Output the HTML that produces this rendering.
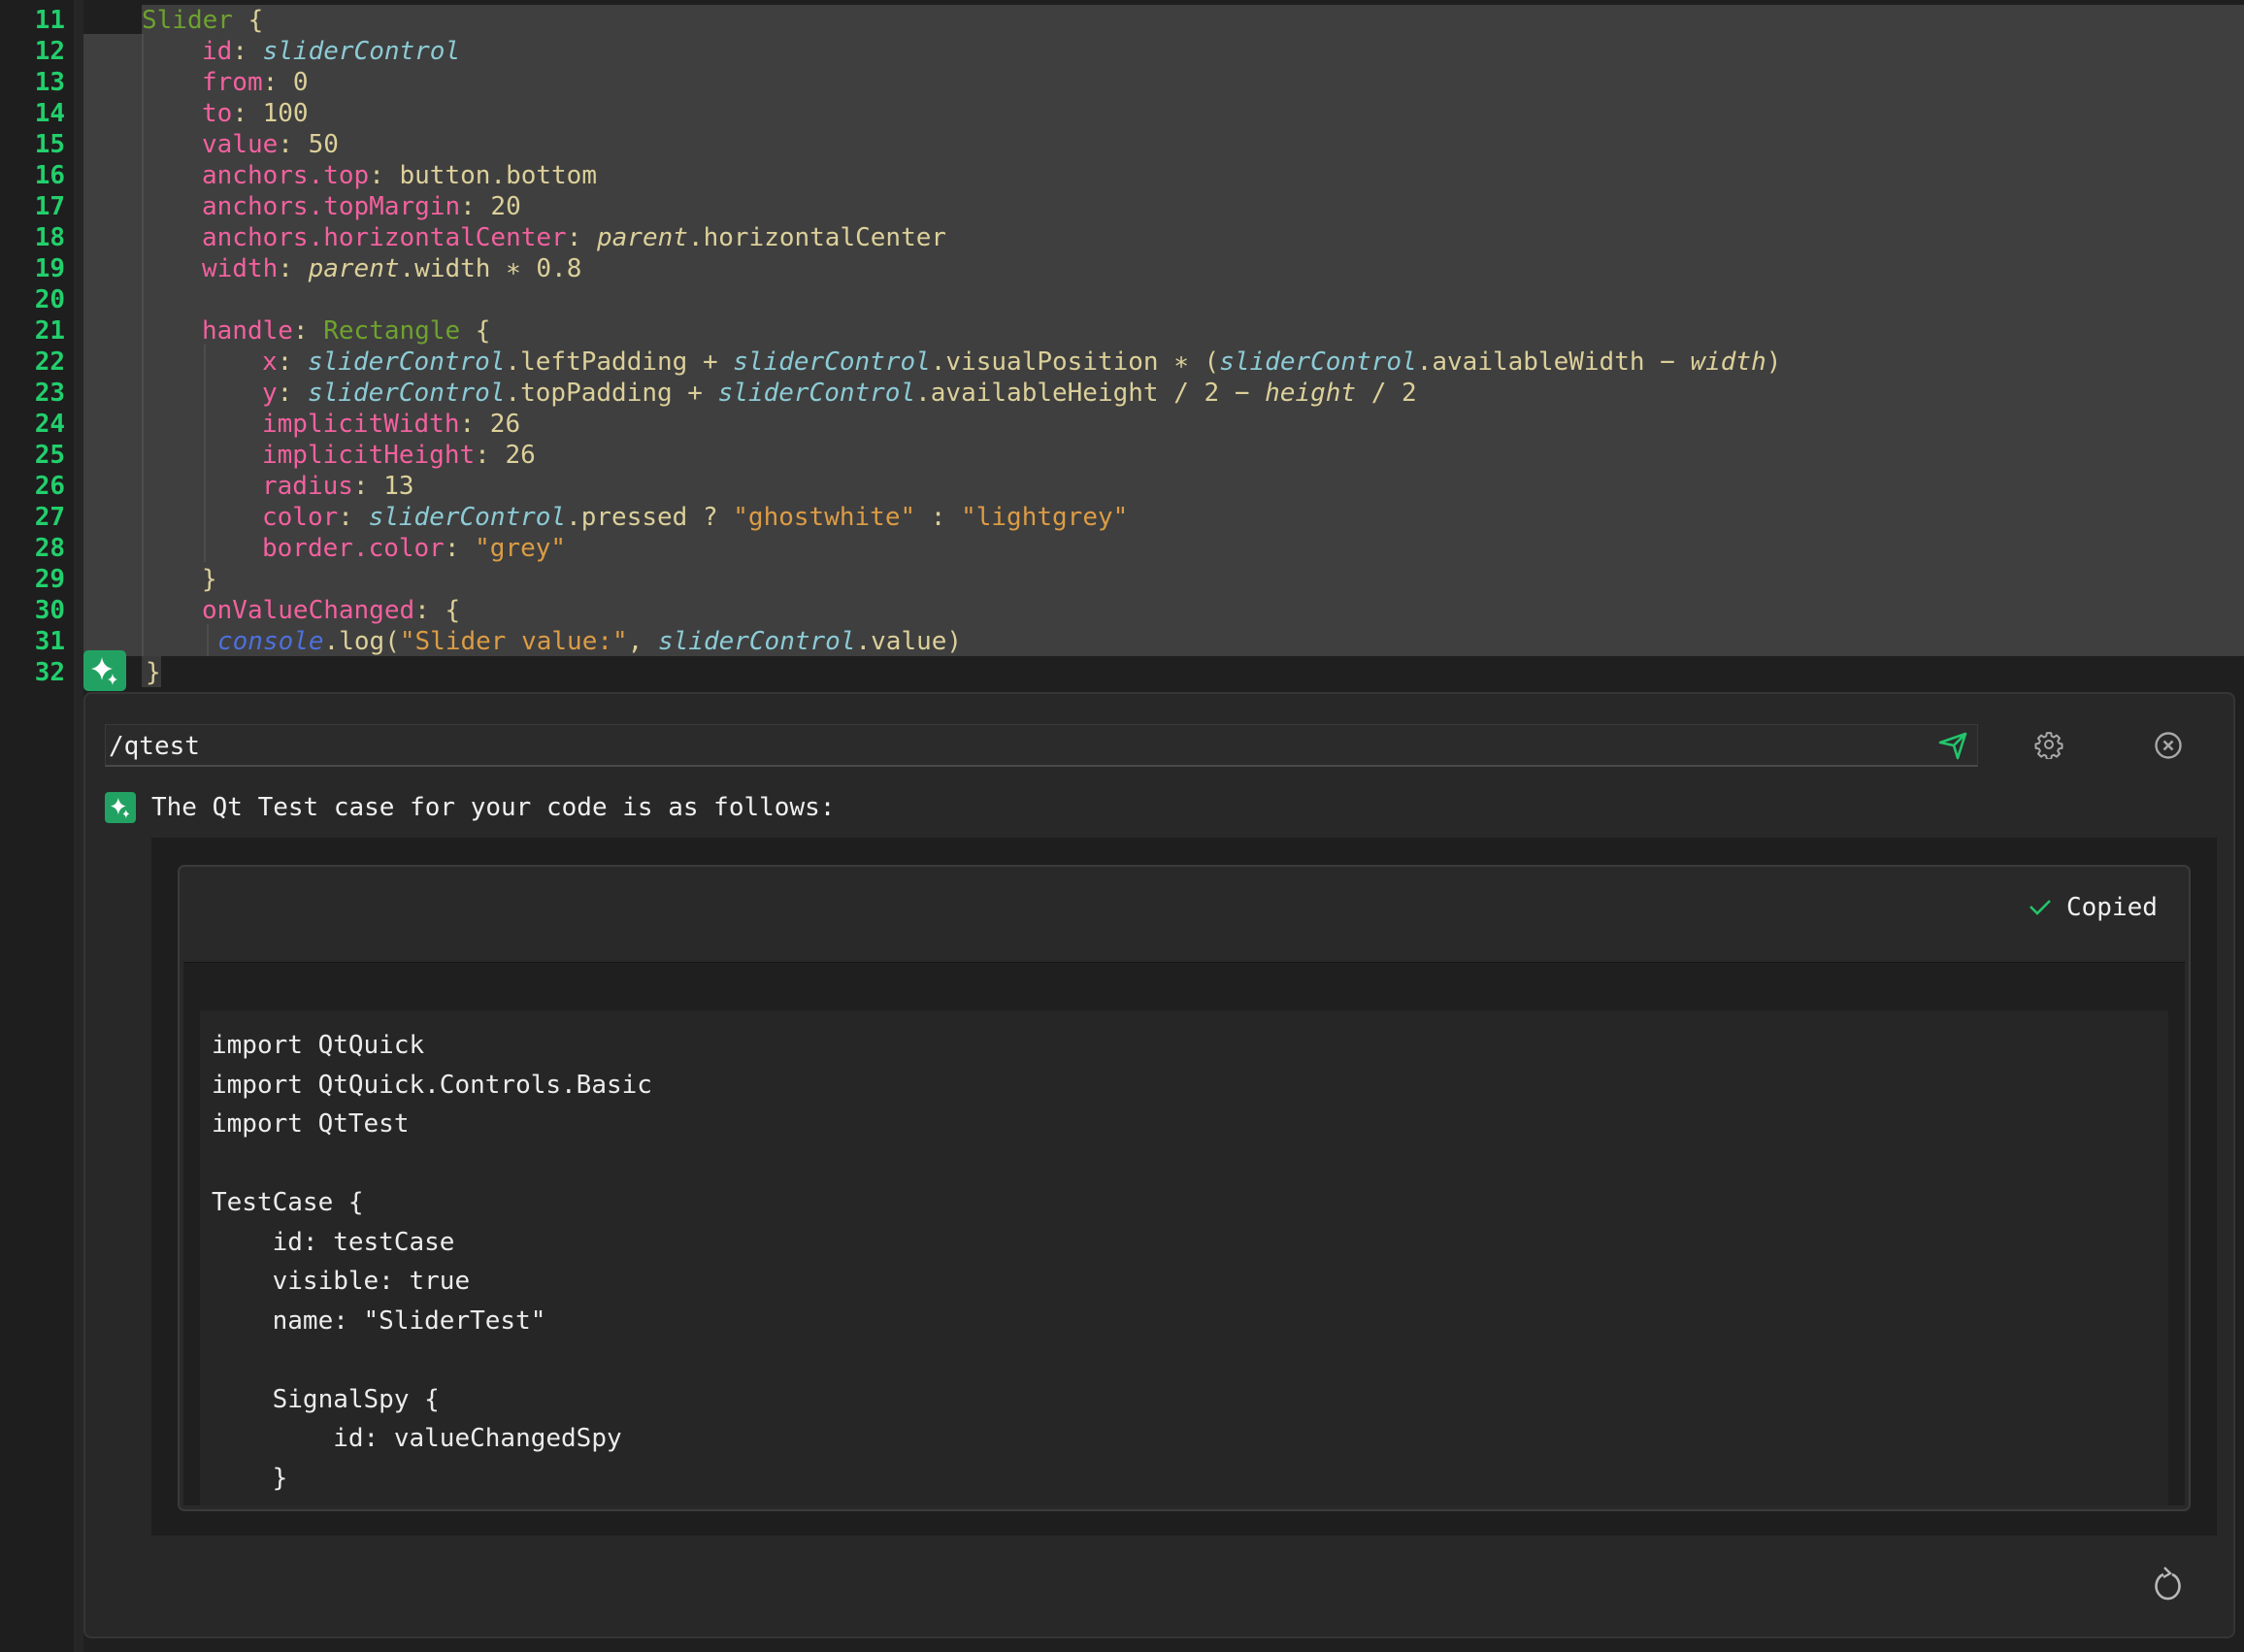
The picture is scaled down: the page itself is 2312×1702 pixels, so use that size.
<!DOCTYPE html>
<html><head><meta charset="utf-8">
<style>
*{margin:0;padding:0;box-sizing:border-box}
body{width:2312px;height:1702px;background:#1f1f1f;position:relative;overflow:hidden;font-family:"DejaVu Sans Mono","Liberation Mono",monospace;font-size:26px}
.a{position:absolute}
.ln{position:absolute;left:0;width:67px;text-align:right;color:#22cf6c;font-weight:bold;height:32px;line-height:32px;margin-top:3px}
.cl{position:absolute;white-space:pre;height:32px;line-height:32px;color:#dcd09a;margin-top:3px}
.k{color:#f2619f}.i{color:#8ccbd6;font-style:italic}.g{color:#6ea22f}.s{color:#dc9c45}.p{font-style:italic;color:#dcd09a}.b{color:#4d70dc;font-style:italic}
.cc{position:absolute;left:218px;white-space:pre;color:#ececec;line-height:40px;height:40px;margin-top:3px}
</style></head><body>
<div class="a" style="left:0;top:0;width:76px;height:1702px;background:#1e1e1e"></div>
<div class="a" style="left:76px;top:0;width:10px;height:1702px;background:#262626"></div>
<div class="a" style="left:86px;top:5px;width:2226px;height:671px;background:#3f3f3f"></div>
<div class="a" style="left:86px;top:0;width:2226px;height:5px;background:#1f1f1f"></div>
<div class="a" style="left:86px;top:5px;width:60px;height:30px;background:#1f1f1f"></div>
<div class="a" style="left:86px;top:676px;width:2226px;height:37px;background:#1f1f1f"></div>
<div class="a" style="left:146px;top:676px;width:20px;height:32px;background:#3a3a3a"></div>
<div class="a" style="left:146px;top:35px;width:2px;height:641px;background:#4d4d4d"></div>
<div class="a" style="left:210px;top:355px;width:2px;height:224px;background:#4d4d4d"></div>
<div class="a" style="left:213px;top:643px;width:2px;height:33px;background:#4d4d4d"></div>

<div class="ln" style="top:2px">11</div><div class="ln" style="top:34px">12</div><div class="ln" style="top:66px">13</div><div class="ln" style="top:98px">14</div><div class="ln" style="top:130px">15</div><div class="ln" style="top:162px">16</div><div class="ln" style="top:194px">17</div><div class="ln" style="top:226px">18</div><div class="ln" style="top:258px">19</div><div class="ln" style="top:290px">20</div><div class="ln" style="top:322px">21</div><div class="ln" style="top:354px">22</div><div class="ln" style="top:386px">23</div><div class="ln" style="top:418px">24</div><div class="ln" style="top:450px">25</div><div class="ln" style="top:482px">26</div><div class="ln" style="top:514px">27</div><div class="ln" style="top:546px">28</div><div class="ln" style="top:578px">29</div><div class="ln" style="top:610px">30</div><div class="ln" style="top:642px">31</div><div class="ln" style="top:674px">32</div>

<div class="cl" style="left:146px;top:2px"><span class="g">Slider</span> {</div>
<div class="cl" style="left:208px;top:34px"><span class="k">id</span>: <span class="i">sliderControl</span></div>
<div class="cl" style="left:208px;top:66px"><span class="k">from</span>: 0</div>
<div class="cl" style="left:208px;top:98px"><span class="k">to</span>: 100</div>
<div class="cl" style="left:208px;top:130px"><span class="k">value</span>: 50</div>
<div class="cl" style="left:208px;top:162px"><span class="k">anchors.top</span>: button.bottom</div>
<div class="cl" style="left:208px;top:194px"><span class="k">anchors.topMargin</span>: 20</div>
<div class="cl" style="left:208px;top:226px"><span class="k">anchors.horizontalCenter</span>: <span class="p">parent</span>.horizontalCenter</div>
<div class="cl" style="left:208px;top:258px"><span class="k">width</span>: <span class="p">parent</span>.width ∗ 0.8</div>
<div class="cl" style="left:208px;top:322px"><span class="k">handle</span>: <span class="g">Rectangle</span> {</div>
<div class="cl" style="left:270px;top:354px"><span class="k">x</span>: <span class="i">sliderControl</span>.leftPadding + <span class="i">sliderControl</span>.visualPosition ∗ (<span class="i">sliderControl</span>.availableWidth − <span class="p">width</span>)</div>
<div class="cl" style="left:270px;top:386px"><span class="k">y</span>: <span class="i">sliderControl</span>.topPadding + <span class="i">sliderControl</span>.availableHeight / 2 − <span class="p">height</span> / 2</div>
<div class="cl" style="left:270px;top:418px"><span class="k">implicitWidth</span>: 26</div>
<div class="cl" style="left:270px;top:450px"><span class="k">implicitHeight</span>: 26</div>
<div class="cl" style="left:270px;top:482px"><span class="k">radius</span>: 13</div>
<div class="cl" style="left:270px;top:514px"><span class="k">color</span>: <span class="i">sliderControl</span>.pressed ? <span class="s">"ghostwhite"</span> : <span class="s">"lightgrey"</span></div>
<div class="cl" style="left:270px;top:546px"><span class="k">border.color</span>: <span class="s">"grey"</span></div>
<div class="cl" style="left:208px;top:578px">}</div>
<div class="cl" style="left:208px;top:610px"><span class="k">onValueChanged</span>: {</div>
<div class="cl" style="left:224px;top:642px"><span class="b">console</span>.log(<span class="s">"Slider value:"</span>, <span class="i">sliderControl</span>.value)</div>
<div class="cl" style="left:150px;top:674px">}</div>

<div class="a" style="left:86px;top:670px;width:44px;height:42px;background:#22a262;border-radius:5px"></div>
<svg class="a" style="left:86px;top:670px" width="44" height="42" viewBox="0 0 44 42"><path d="M19 7 Q20.5 17 30 19 Q20.5 21 19 31 Q17.5 21 8 19 Q17.5 17 19 7Z" fill="#fff"/><path d="M30 24 Q30.8 29 35 30 Q30.8 31 30 36 Q29.2 31 25 30 Q29.2 29 30 24Z" fill="#fff"/></svg>

<div class="a" style="left:86px;top:713px;width:2217px;height:975px;background:#282828;border:2px solid #353535;border-radius:8px"></div>
<div class="a" style="left:108px;top:746px;width:1930px;height:44px;background:#2b2b2b;border:1px solid #3a3a3a;border-bottom:2px solid #4a4a4a"></div>
<div class="a" style="left:112px;top:747px;line-height:44px;color:#f0f0f0;white-space:pre">/qtest</div>
<svg class="a" style="left:1996px;top:752px" width="32" height="32" viewBox="0 0 32 32"><path d="M3 13 L29 4 L21 29 L17 16 Z M17 16 L29 4" fill="none" stroke="#22c56b" stroke-width="2.6" stroke-linejoin="round"/></svg>
<svg class="a" style="left:2096px;top:752px" width="30" height="30" viewBox="0 0 24 24"><path d="M10.3 2.5h3.4l.6 2.7 1.7.8 2.4-1.5 2.4 2.4-1.5 2.4.8 1.7 2.7.6v3.4l-2.7.6-.8 1.7 1.5 2.4-2.4 2.4-2.4-1.5-1.7.8-.6 2.7h-3.4l-.6-2.7-1.7-.8-2.4 1.5-2.4-2.4 1.5-2.4-.8-1.7-2.7-.6v-3.4l2.7-.6.8-1.7-1.5-2.4 2.4-2.4 2.4 1.5 1.7-.8z" fill="none" stroke="#a8a8a8" stroke-width="1.6" stroke-linejoin="round"/><circle cx="12" cy="12" r="3.2" fill="none" stroke="#a8a8a8" stroke-width="1.6"/></svg>
<svg class="a" style="left:2219px;top:753px" width="30" height="30" viewBox="0 0 30 30"><circle cx="15" cy="15" r="12.5" fill="none" stroke="#a8a8a8" stroke-width="2.4"/><path d="M10.5 10.5 L19.5 19.5 M19.5 10.5 L10.5 19.5" stroke="#a8a8a8" stroke-width="2.6"/></svg>

<div class="a" style="left:108px;top:816px;width:32px;height:32px;background:#22a262;border-radius:4px"></div>
<svg class="a" style="left:108px;top:816px" width="32" height="32" viewBox="0 0 44 42"><path d="M19 7 Q20.5 17 30 19 Q20.5 21 19 31 Q17.5 21 8 19 Q17.5 17 19 7Z" fill="#fff"/><path d="M30 24 Q30.8 29 35 30 Q30.8 31 30 36 Q29.2 31 25 30 Q29.2 29 30 24Z" fill="#fff"/></svg>
<div class="a" style="left:156px;top:812px;line-height:40px;color:#f0f0f0;white-space:pre">The Qt Test case for your code is as follows:</div>

<div class="a" style="left:156px;top:863px;width:2128px;height:719px;background:#1e1e1e"></div>
<div class="a" style="left:183px;top:891px;width:2074px;height:666px;background:#292929;border:2px solid #3b3b3b;border-radius:7px"></div>
<div class="a" style="left:189px;top:991px;width:2062px;height:560px;background:#1f1f1f;border-top:1px solid #161616"></div>
<div class="a" style="left:206px;top:1041px;width:2028px;height:510px;background:#262626"></div>
<svg class="a" style="left:2088px;top:920px" width="28" height="28" viewBox="0 0 28 28"><path d="M4 14 L11 21 L24 8" fill="none" stroke="#22c56b" stroke-width="2.6"/></svg>
<div class="a" style="left:2129px;top:915px;line-height:40px;color:#f0f0f0">Copied</div>

<div class="cc" style="top:1054px">import QtQuick</div>
<div class="cc" style="top:1095px">import QtQuick.Controls.Basic</div>
<div class="cc" style="top:1135px">import QtTest</div>
<div class="cc" style="top:1216px">TestCase {</div>
<div class="cc" style="top:1257px">    id: testCase</div>
<div class="cc" style="top:1297px">    visible: true</div>
<div class="cc" style="top:1338px">    name: "SliderTest"</div>
<div class="cc" style="top:1419px">    SignalSpy {</div>
<div class="cc" style="top:1459px">        id: valueChangedSpy</div>
<div class="cc" style="top:1500px">    }</div>

<svg class="a" style="left:2216px;top:1610px" width="36" height="42" viewBox="0 0 36 42"><path d="M22 12 A12 13 0 1 1 13 12" fill="none" stroke="#b8b8b8" stroke-width="2.6"/><path d="M14 5 L20 11 L13 15" fill="none" stroke="#b8b8b8" stroke-width="2.4"/></svg>
</body></html>
